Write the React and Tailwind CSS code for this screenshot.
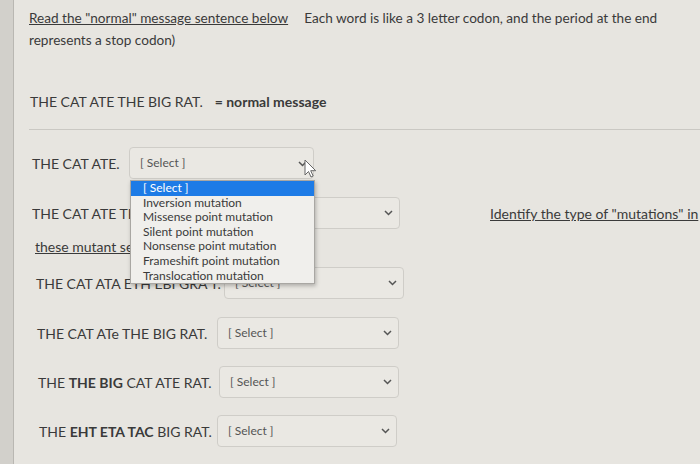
import React from 'react'

const Chevron = () => (
  <svg width="9" height="6" viewBox="0 0 9 6" className="shrink-0">
    <path d="M1 1l3.5 3.5L8 1" fill="none" stroke="#555" strokeWidth="1.5" />
  </svg>
)

const SelectBox = ({ width, label = '[ Select ]' }) => (
  <div
    className={`h-[32px] ${width} flex items-center justify-between pl-[10px] pr-[6px] border border-[#cfcdc8] rounded-[4px] bg-[#eae8e3]`}
  >
    <span className="text-[12px] text-[#555]">{label}</span>
    <Chevron />
  </div>
)

const options = [
  'Inversion mutation',
  'Missense point mutation',
  'Silent point mutation',
  'Nonsense point mutation',
  'Frameshift point mutation',
  'Translocation mutation',
]

export default function App() {
  return (
    <div
      className="relative w-[700px] h-[464px] flex overflow-hidden bg-[#e7e5e0] text-[#3a3a3a]"
      style={{ fontFamily: 'Lato, "Open Sans", sans-serif' }}
    >
      <div className="w-[14px] shrink-0 bg-[#d2d0cb] border-r border-[#b9b7b2]" />

      <div className="flex-1 flex flex-col text-[14px]">
        <div className="pl-[15px] pt-[7px] leading-[22px] pr-[20px] text-[13.6px]">
          <span className="underline">Read the "normal" message sentence below</span>
          <span className="ml-[16px]">
            Each word is like a 3 letter codon, and the period at the end represents a stop codon)
          </span>
        </div>

        <div className="pl-[16px] mt-[40px] leading-[22px]">
          THE CAT ATE THE BIG RAT.
          <span className="ml-[12px] font-bold">= normal message</span>
        </div>

        <div className="ml-[15px] mt-[16px] border-t border-[#cac8c3]" />

        {/* row 1 */}
        <div className="flex items-center pl-[18px] mt-[17px]">
          <span className="w-[97px] shrink-0">THE CAT ATE.</span>
          <div className="h-[32px] w-[185px] flex items-start justify-between pl-[10px] pr-[6px] pt-[6px] border border-[#cfcdc8] rounded-[4px] bg-[#eae8e3]">
            <span className="text-[12px] text-[#555]">[ Select ]</span>
            <div className="mt-[7px]">
              <Chevron />
            </div>
          </div>
        </div>

        {/* row 2 */}
        <div className="flex items-center pl-[18px] mt-[18px]">
          <span className="w-[195px] shrink-0 whitespace-nowrap overflow-hidden">THE CAT ATE THE RAT.</span>
          <SelectBox width="w-[173px]" />
          <span className="ml-[90px] whitespace-nowrap underline">Identify the type of "mutations" in</span>
        </div>

        <div className="pl-[21px] mt-[8px] h-[20px] leading-[20px]">
          <span className="underline">these mutant sentences</span>
        </div>

        {/* row 3 */}
        <div className="flex items-center pl-[22px] mt-[10px]">
          <span className="w-[188px] shrink-0 whitespace-nowrap">THE CAT ATA ETH EBI GRA T.</span>
          <SelectBox width="w-[180px]" />
        </div>

        {/* row 4 */}
        <div className="flex items-center pl-[23px] mt-[18px]">
          <span className="w-[180px] shrink-0 whitespace-nowrap">THE CAT ATe THE BIG RAT.</span>
          <SelectBox width="w-[182px]" />
        </div>

        {/* row 5 */}
        <div className="flex items-center pl-[24px] mt-[17px]">
          <span className="w-[181px] shrink-0 whitespace-nowrap">
            THE <b>THE BIG</b> CAT ATE RAT.
          </span>
          <SelectBox width="w-[180px]" />
        </div>

        {/* row 6 */}
        <div className="flex items-center pl-[25px] mt-[17px]">
          <span className="w-[178px] shrink-0 whitespace-nowrap">
            THE <b>EHT ETA TAC</b> BIG RAT.
          </span>
          <SelectBox width="w-[180px]" />
        </div>
      </div>

      {/* open dropdown list */}
      <div className="absolute left-[130px] top-[180px] w-[185px] bg-[#f0efec] border border-[#a9a7a3] shadow-[1px_2px_4px_rgba(0,0,0,0.25)] text-[12px] leading-[14.6px] text-[#3a3a3a]">
        <div className="pl-[12px] bg-[#1d7be6] text-white">[ Select ]</div>
        {options.map((o) => (
          <div key={o} className="pl-[12px] whitespace-nowrap">
            {o}
          </div>
        ))}
      </div>

      {/* mouse pointer */}
      <svg className="absolute left-[304px] top-[159px]" width="13" height="19" viewBox="0 0 13 19">
        <path
          d="M1 1v15l3.5-3.5 2.5 5.5 2.2-1-2.5-5.3h5z"
          fill="#fff"
          stroke="#666"
          strokeWidth="1"
          strokeLinejoin="round"
        />
      </svg>
    </div>
  )
}
